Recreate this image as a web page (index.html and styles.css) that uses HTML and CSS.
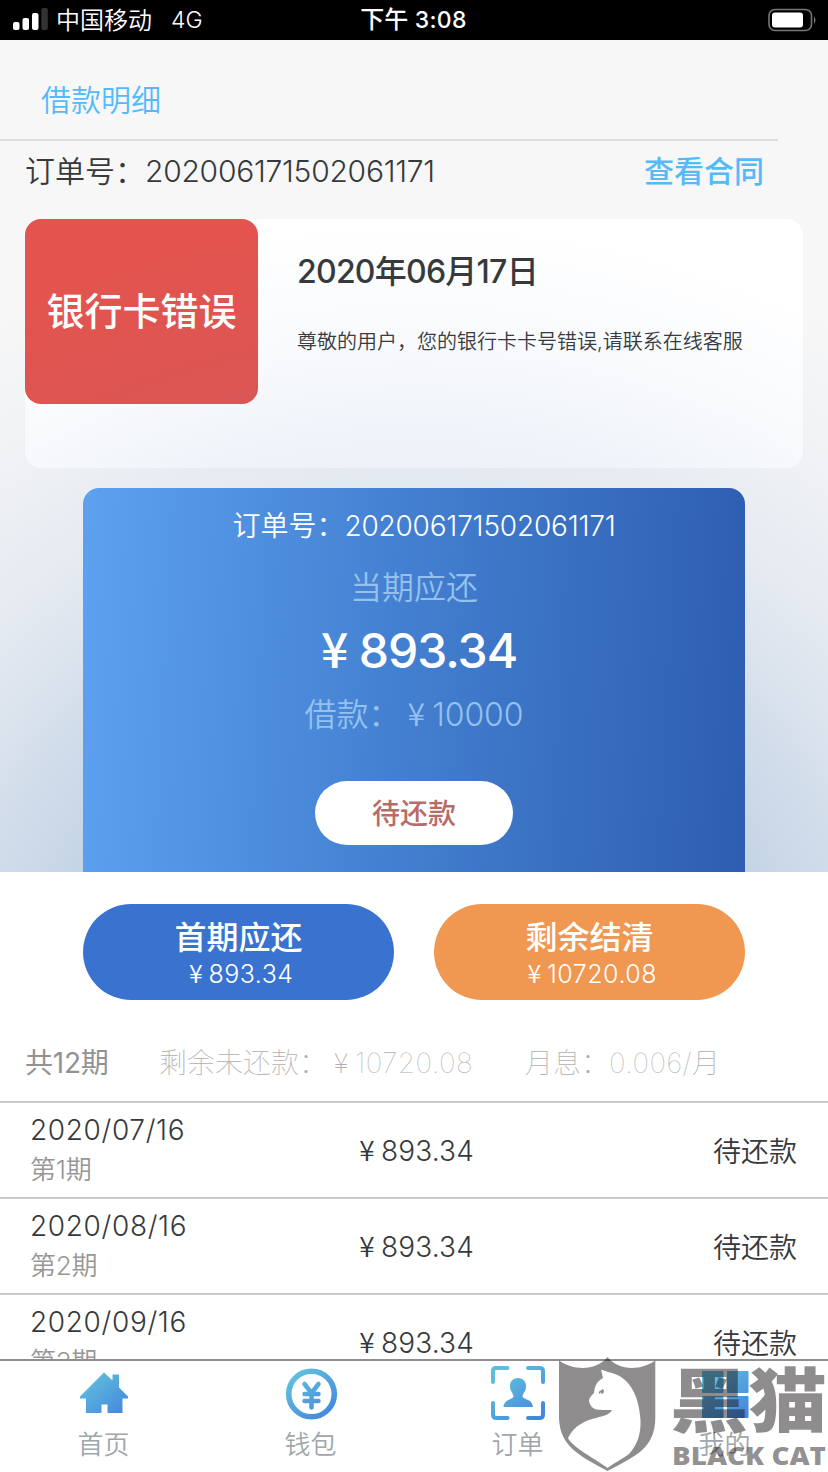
FILE: index.html
```
<!DOCTYPE html>
<html lang="zh-CN">
<head>
    <meta charset="UTF-8">
    <meta name="viewport" content="width=device-width, initial-scale=1.0">
    <title>借款明细</title>
    <link rel="stylesheet" href="styles.css">
</head>
<body>
    <div class="status-bar">
        <div class="carrier">
            <svg class="signal" viewBox="0 0 35 22" width="35" height="22">
                <rect x="0" y="14" width="6.5" height="8" rx="2" fill="#fff"/>
                <rect x="9.5" y="10" width="6.5" height="12" rx="2" fill="#fff"/>
                <rect x="19" y="5" width="6.5" height="17" rx="2" fill="#fff"/>
                <rect x="28.300" y="0" width="6.5" height="22" rx="2" fill="#333"/>
            </svg>
            <span class="operator">中国移动</span>
            <span class="network">4G</span>
        </div>
        <div class="time">下午 <span class="clock">3:08</span></div>
        <svg class="battery" viewBox="0 0 50 24" width="50" height="24">
            <rect x="1" y="1.500" width="42.500" height="21" rx="6" fill="none" stroke="#777" stroke-width="1.600"/>
            <rect x="4" y="4.500" width="31" height="15" rx="3" fill="#fff"/>
            <path d="M46 8.500 Q49 12 46 16 Z" fill="#777"/>
        </svg>
    </div>

    <div class="top">
        <div class="title">借款明细</div>
        <div class="order-row">
            <div class="order-no">订单号：<span class="num">202006171502061171</span></div>
            <a class="contract">查看合同</a>
        </div>
        <div class="notice">
            <div class="notice-tag">银行卡错误</div>
            <div class="notice-text">
                <div class="notice-date">2020年06月17日</div>
                <div class="notice-msg">尊敬的用户，您的银行卡卡号错误,请联系在线客服</div>
            </div>
        </div>
        <div class="bill">
            <div class="bill-no">订单号：<span class="num">202006171502061171</span></div>
            <div class="bill-label">当期应还</div>
            <div class="bill-money"><span class="yen">¥</span>893.34</div>
            <div class="bill-loan">借款：<span class="yen">¥</span>10000</div>
            <div class="bill-state">待还款</div>
        </div>
    </div>

    <div class="actions">
        <div class="btn btn-first">
            <div class="btn-name">首期应还</div>
            <div class="btn-money"><span class="yen">¥</span>893.34</div>
        </div>
        <div class="btn btn-rest">
            <div class="btn-name">剩余结清</div>
            <div class="btn-money"><span class="yen">¥</span>10720.08</div>
        </div>
    </div>

    <div class="summary">
        <span class="total">共12期</span>
        <span class="remain">剩余未还款：<span class="yen">¥</span><span class="num">10720.08</span></span>
        <span class="rate">月息：<span class="num">0.006/</span>月</span>
    </div>

    <div class="list">
        <div class="item">
            <div class="when">
                <div class="date">2020/07/16</div>
                <div class="term">第1期</div>
            </div>
            <div class="money"><span class="yen">¥</span>893.34</div>
            <div class="state">待还款</div>
        </div>
        <div class="item">
            <div class="when">
                <div class="date">2020/08/16</div>
                <div class="term">第2期</div>
            </div>
            <div class="money"><span class="yen">¥</span>893.34</div>
            <div class="state">待还款</div>
        </div>
        <div class="item">
            <div class="when">
                <div class="date">2020/09/16</div>
                <div class="term">第3期</div>
            </div>
            <div class="money"><span class="yen">¥</span>893.34</div>
            <div class="state">待还款</div>
        </div>
    </div>

    <div class="tabbar">
        <div class="tab">
            <svg class="tab-icon" viewBox="0 0 54 54" width="54" height="54">
                <defs>
                    <linearGradient id="blue" gradientUnits="userSpaceOnUse" x1="8" y1="4" x2="46" y2="50">
                        <stop offset="0.150" stop-color="#5fbcdc"/>
                        <stop offset="1" stop-color="#4486de"/>
                    </linearGradient>
                </defs>
                <path d="M27 6.500 L35.500 14.500 V8.500 H42 V21.500 L51 30.500 V32.500 H45.500 V47 H30.500 V38.500 H24.500 V47 H9 V32.500 H3 V30.500 Z" fill="url(#blue)"/>
            </svg>
            <div class="tab-name">首页</div>
        </div>
        <div class="tab">
            <svg class="tab-icon" viewBox="0 0 54 54" width="54" height="54" fill="none" stroke="url(#blue)">
                <circle cx="27.500" cy="28" r="22.800" stroke-width="5.600"/>
                <path d="M20.500 18 L27.500 27 L34.500 18 M20.500 28 H34.500 M20.500 35 H34.500 M27.500 27 V41.500" stroke-width="4.500" stroke-linecap="round" stroke-linejoin="round"/>
            </svg>
            <div class="tab-name">钱包</div>
        </div>
        <div class="tab">
            <svg class="tab-icon" viewBox="0 0 54 54" width="54" height="54">
                <path d="M2 16 V5 Q2 2 5 2 H16.500 M37 2 H48.500 Q52 2 52 5 V16 M52 37 V48.500 Q52 52 48.500 52 H37 M16.500 52 H5.500 Q2 52 2 48.500 V37" fill="none" stroke="url(#blue)" stroke-width="4" stroke-linecap="round"/>
                <path d="M27 12 C32.500 12 35.300 16 35 21 C34.800 25.500 32 27 31.500 30 C31.500 34 41.500 32.500 42 41 H12.500 C13 32.500 22.500 34 22.500 30 C22 27 19.300 25.500 19 21 C18.700 16 21.500 12 27 12 Z" fill="url(#blue)"/>
            </svg>
            <div class="tab-name">订单</div>
        </div>
        <div class="tab">
            <svg class="tab-icon" viewBox="0 0 54 54" width="54" height="54" fill="url(#blue)">
                <rect x="4" y="5" width="21.500" height="22" rx="1"/>
                <rect x="29" y="5" width="21.500" height="22" rx="1"/>
                <rect x="4" y="30" width="21.500" height="22" rx="1"/>
                <rect x="29" y="30" width="21.500" height="22" rx="1"/>
            </svg>
            <div class="tab-name">我的</div>
        </div>
    </div>

    <svg class="watermark" viewBox="0 0 272 116" width="272" height="116">
        <path fill-rule="evenodd" d="M3 4.500 C18 15 40 15 51.500 1 C63 15 84 15 99.300 4.500 V62 C99 92 80 100 51.500 115 C22 99 4 90 3 62 Z
            M12 82 C16 91 38 102 51.500 112 C60 106 68 102 73 98 C82 88 85 77 84.500 64 C83 40 74 20 52 16 L45 13.500 L47 22 C39 27 39 31 38 37 C33 42 32 44 34 48 C37 54 40 54 56 54 C51 65 25 57 12 82 Z" fill="#1b1519" fill-opacity="0.490"/>
        <path d="M42.500 36 L47 33 Q49.500 37 45.500 38 L45 36 L43.500 38 Z" fill="#8c8a8c"/>
        <text class="wm-cn" transform="translate(114 70.500) scale(1 0.900)" textLength="157" lengthAdjust="spacingAndGlyphs">黑猫</text>
        <text class="wm-en" x="116" y="108.500" textLength="154" lengthAdjust="spacingAndGlyphs">BLACK CAT</text>
    </svg>
</body>
</html>
```
FILE: styles.css
```
* {
    box-sizing: border-box;
}

body {
    position: relative;
    width: 828px;
    height: 1472px;
    margin: 0;
    overflow: hidden;
    display: flex;
    flex-direction: column;
    background: #fff;
    color: #36393b;
    font-family: Inter, "Noto Sans CJK SC", sans-serif;
    font-weight: 350;
    white-space: nowrap;
}

.yen {
    display: inline-block;
    width: 1em;
    text-align: center;
    letter-spacing: 0;
    font-family: "Noto Sans CJK SC", sans-serif;
    line-height: 1;
}

/* status bar */
.status-bar {
    height: 40px;
    flex: none;
    display: grid;
    grid-template-columns: 1fr auto 1fr;
    grid-template-rows: 40px;
    align-items: center;
    padding: 0 12px 0 13px;
    background: #000;
    color: #fff;
    font-size: 24px;
    line-height: 42px;
}

.carrier {
    display: flex;
    align-items: center;
}

.signal {
    margin-bottom: 2px;
}

.operator {
    margin-left: 8px;
    padding-top: 1px;
}

.network {
    margin-left: 19px;
    font-size: 23px;
}

.time {
    margin-left: -2px;
    font-weight: 500;
}

.clock {
    font-weight: 500;
    font-size: 23px;
    letter-spacing: 0.3px;
}

.battery {
    justify-self: end;
    margin-right: -2px;
}

/* upper part */
.top {
    position: relative;
    height: 832px;
    flex: none;
    overflow: hidden;
    background: #f7f7f7;
}

/* blue glow of the bill card, it also tints the notice */
.top::after {
    content: "";
    position: absolute;
    inset: 0;
    background: radial-gradient(850px 780px at 50% 960px, rgba(65, 120, 185, 0.280) 42%, rgba(65, 120, 185, 0.210) 52%, rgba(65, 115, 185, 0.140) 61%, rgba(65, 115, 185, 0.095) 69%, rgba(65, 115, 185, 0.045) 83%, rgba(65, 115, 185, 0));
}

.title {
    width: 778px;
    height: 101px;
    padding: 18px 0 0 41px;
    border-bottom: 2px solid #dedede;
    color: #55bafa;
    font-size: 30px;
    line-height: 84px;
}

.order-row {
    display: flex;
    justify-content: space-between;
    height: 78px;
    padding: 0 64px 0 25px;
    font-size: 30px;
    line-height: 60px;
}

.order-row .num {
    letter-spacing: -0.250px;
}

.contract {
    color: #55bafa;
    font-weight: 500;
}

.notice {
    display: flex;
    height: 249px;
    margin: 0 25px;
    border-radius: 16px;
    background: #fff;
}

.notice-tag {
    width: 233px;
    height: 185px;
    border-radius: 16px;
    background: #e3544e;
    color: #fff;
    font-size: 38px;
    font-weight: 500;
    line-height: 184px;
    text-align: center;
}

.notice-text {
    padding: 32px 0 0 39px;
}

.notice-date {
    font-size: 32px;
    font-weight: 500;
    line-height: 42px;
    letter-spacing: -0.750px;
}

.notice-msg {
    margin-top: 33px;
    font-size: 20px;
    line-height: 33px;
}

.bill {
    position: relative;
    z-index: 1;
    width: 662px;
    height: 560px;
    margin: 20px auto 0;
    border-radius: 16px;
    background: linear-gradient(93deg, #5da1f0, #437fd0 48%, #2d5cb0);
    color: #fff;
    text-align: center;
}

.bill-no {
    padding: 18px 0 0 20px;
    font-size: 28px;
    line-height: 40px;
}

.bill-no .num {
    letter-spacing: -0.2px;
}

.bill-label {
    margin-top: 19px;
    color: #94c1ee;
    font-size: 32px;
    line-height: 46px;
}

.bill-money {
    margin-top: 9px;
    font-size: 48px;
    font-weight: 500;
    line-height: 62px;
    letter-spacing: -1px;
}

.bill-loan {
    margin-top: 10px;
    color: #94c1ee;
    font-size: 32px;
    line-height: 46px;
    letter-spacing: -0.1px;
}

.bill-state {
    width: 198px;
    height: 64px;
    margin: 43px auto 0;
    border-radius: 32px;
    background: #fff;
    color: #b76c68;
    font-size: 28px;
    font-weight: 500;
    line-height: 67px;
}

/* repay buttons */
.actions {
    display: flex;
    gap: 40px;
    padding: 32px 83px 0;
    flex: none;
}

.btn {
    flex: 1;
    height: 96px;
    padding-top: 12px;
    border-radius: 48px;
    color: #fff;
    text-align: center;
}

.btn-first {
    background: #3973cf;
}

.btn-rest {
    background: #f09851;
}

.btn-name {
    font-size: 32px;
    font-weight: 500;
    line-height: 44px;
}

.btn-money {
    font-size: 25px;
    line-height: 26px;
    letter-spacing: 0.5px;
}

.summary {
    display: flex;
    height: 101px;
    flex: none;
    padding: 25px 0 0 25px;
    color: #b0b0b0;
    font-size: 28px;
    font-weight: 100;
    line-height: 76px;
}

.summary .num {
    letter-spacing: 0.4px;
}

.total {
    width: 134px;
    color: #929292;
    font-weight: 400;
    letter-spacing: -0.2px;
}

.remain {
    width: 366px;
}

/* instalments */
.list {
    height: 258px;
    flex: none;
    overflow: hidden;
}

.item {
    display: grid;
    grid-template-columns: 1fr auto 1fr;
    height: 96px;
    padding: 0 31px 0 30px;
    border-top: 2px solid #c8c8c8;
}

.date {
    margin-top: 7px;
    font-size: 28px;
    line-height: 40px;
    letter-spacing: 0.650px;
}

.term {
    color: #979797;
    font-size: 26px;
    line-height: 39px;
    letter-spacing: -0.2px;
}

.money,
.state {
    font-size: 28px;
    line-height: 96px;
}

.money {
    letter-spacing: 0.2px;
}

.state {
    padding-top: 1px;
    text-align: right;
}

/* bottom tabs */
.tabbar {
    display: grid;
    grid-template-columns: repeat(4, 1fr);
    flex: 1;
    border-top: 2px solid #8e8e8e;
    background: #fff;
}

.tab {
    display: flex;
    flex-direction: column;
    align-items: center;
    padding-top: 5px;
}

.tab-name {
    margin-top: 6px;
    color: #a0a7aa;
    font-size: 26px;
    line-height: 38px;
}

/* logo over the bottom right corner */
.watermark {
    position: absolute;
    left: 556px;
    top: 1356px;
}

.wm-cn,
.wm-en {
    fill: #1b1519;
    fill-opacity: 0.490;
    font-weight: 900;
}

.wm-cn {
    font-family: "Noto Sans CJK SC", sans-serif;
    font-size: 78px;
}

.wm-en {
    font-family: "Open Sans", sans-serif;
    font-size: 24px;
    font-weight: 800;
}
```
